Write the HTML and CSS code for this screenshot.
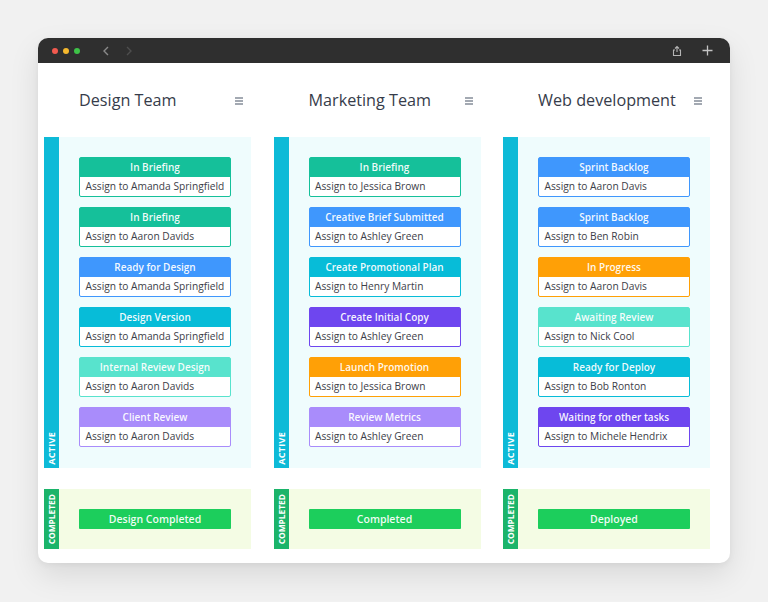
FILE: index.html
```html
<!DOCTYPE html>
<html>
<head>
<meta charset="utf-8">
<link rel="stylesheet" href="styles.css">
</head>
<body>
<div class="window">
  <div class="titlebar">
    <div class="dots"><span class="dot red"></span><span class="dot yellow"></span><span class="dot green"></span></div>
    <div class="nav">
      <svg width="8" height="10" viewBox="0 0 8 10"><path d="M6 1 L2 5 L6 9" fill="none" stroke="#8a8a8a" stroke-width="1.4"/></svg>
      <svg width="8" height="10" viewBox="0 0 8 10"><path d="M2 1 L6 5 L2 9" fill="none" stroke="#4e4e4e" stroke-width="1.4"/></svg>
    </div>
    <div class="spacer"></div>
    <div class="tools">
      <svg width="10" height="12" viewBox="0 0 10 12"><path d="M5 7 V1.5 M3 3.5 L5 1.5 L7 3.5 M3 5 H1.5 V10.5 H8.5 V5 H7" fill="none" stroke="#b5b5b5" stroke-width="1.1"/></svg>
      <svg width="11" height="11" viewBox="0 0 11 11"><path d="M5.5 0.5 V10.5 M0.5 5.5 H10.5" fill="none" stroke="#c4c4c4" stroke-width="1.3"/></svg>
    </div>
  </div>
  <div class="board">
    <div class="column">
      <div class="col-head"><h2>Design Team</h2><span class="menu"><i></i><i></i><i></i></span></div>
      <div class="section active">
        <div class="strip"><span>ACTIVE</span></div>
        <div class="panel">
          <div class="card teal"><div class="ch">In Briefing</div><div class="cb">Assign to Amanda Springfield</div></div>
          <div class="card teal"><div class="ch">In Briefing</div><div class="cb">Assign to Aaron Davids</div></div>
          <div class="card blue"><div class="ch">Ready for Design</div><div class="cb">Assign to Amanda Springfield</div></div>
          <div class="card cyan"><div class="ch">Design Version</div><div class="cb">Assign to Amanda Springfield</div></div>
          <div class="card aqua"><div class="ch">Internal Review Design</div><div class="cb">Assign to Aaron Davids</div></div>
          <div class="card lav"><div class="ch">Client Review</div><div class="cb">Assign to Aaron Davids</div></div>
        </div>
      </div>
      <div class="section done">
        <div class="strip"><span>COMPLETED</span></div>
        <div class="panel"><div class="done-btn">Design Completed</div></div>
      </div>
    </div>
    <div class="column">
      <div class="col-head"><h2>Marketing Team</h2><span class="menu"><i></i><i></i><i></i></span></div>
      <div class="section active">
        <div class="strip"><span>ACTIVE</span></div>
        <div class="panel">
          <div class="card teal"><div class="ch">In Briefing</div><div class="cb">Assign to Jessica Brown</div></div>
          <div class="card blue"><div class="ch">Creative Brief Submitted</div><div class="cb">Assign to Ashley Green</div></div>
          <div class="card cyan"><div class="ch">Create Promotional Plan</div><div class="cb">Assign to Henry Martin</div></div>
          <div class="card purple"><div class="ch">Create Initial Copy</div><div class="cb">Assign to Ashley Green</div></div>
          <div class="card orange"><div class="ch">Launch Promotion</div><div class="cb">Assign to Jessica Brown</div></div>
          <div class="card lav"><div class="ch">Review Metrics</div><div class="cb">Assign to Ashley Green</div></div>
        </div>
      </div>
      <div class="section done">
        <div class="strip"><span>COMPLETED</span></div>
        <div class="panel"><div class="done-btn">Completed</div></div>
      </div>
    </div>
    <div class="column">
      <div class="col-head"><h2>Web development</h2><span class="menu"><i></i><i></i><i></i></span></div>
      <div class="section active">
        <div class="strip"><span>ACTIVE</span></div>
        <div class="panel">
          <div class="card blue"><div class="ch">Sprint Backlog</div><div class="cb">Assign to Aaron Davis</div></div>
          <div class="card blue"><div class="ch">Sprint Backlog</div><div class="cb">Assign to Ben Robin</div></div>
          <div class="card orange"><div class="ch">In Progress</div><div class="cb">Assign to Aaron Davis</div></div>
          <div class="card aqua"><div class="ch">Awaiting Review</div><div class="cb">Assign to Nick Cool</div></div>
          <div class="card cyan"><div class="ch">Ready for Deploy</div><div class="cb">Assign to Bob Ronton</div></div>
          <div class="card purple"><div class="ch">Waiting for other tasks</div><div class="cb">Assign to Michele Hendrix</div></div>
        </div>
      </div>
      <div class="section done">
        <div class="strip"><span>COMPLETED</span></div>
        <div class="panel"><div class="done-btn">Deployed</div></div>
      </div>
    </div>
  </div>
</div>
</body>
</html>
```
FILE: styles.css
```css
* { box-sizing: border-box; }
html, body { margin: 0; }
body {
  background: #f1f1f1;
  padding: 38px 0 0 38px;
  font-family: "Open Sans", "Liberation Sans", sans-serif;
  height: 602px;
  overflow: hidden;
}
.window {
  width: 692px;
  height: 525px;
  background: #fff;
  border-radius: 10px;
  overflow: hidden;
  box-shadow: 0 12px 30px rgba(0,0,0,0.10), 0 2px 6px rgba(0,0,0,0.05);
}
.titlebar {
  height: 25px;
  background: #2f2f2f;
  display: flex;
  align-items: center;
  padding: 0 17px 0 14px;
}
.dots { display: flex; gap: 5px; }
.dot { width: 6px; height: 6px; border-radius: 50%; display: block; }
.red { background: #f25a4f; }
.yellow { background: #f5b82e; }
.green { background: #3ec348; }
.nav { display: flex; gap: 15px; margin-left: 22px; align-items: center; }
.nav svg { display: block; }
.spacer { flex: 1; }
.tools { display: flex; gap: 20px; align-items: center; }
.tools svg { display: block; }
.board {
  display: grid;
  grid-template-columns: 207px 207px 207px;
  column-gap: 22.5px;
  padding-left: 6px;
}
.col-head {
  height: 74px;
  display: flex;
  align-items: center;
  justify-content: space-between;
  padding: 0 8px 0 35px;
}
.col-head h2 {
  margin: 0;
  font-size: 16.2px;
  font-weight: 400;
  color: #363c4a;
  letter-spacing: 0;
}
.menu { display: flex; flex-direction: column; gap: 1.5px; width: 8px; margin-top: 2px; }
.menu i { display: block; height: 1.5px; background: #a3a9b2; }
.section { display: flex; }
.section.active { height: 331px; }
.section.done { height: 60px; margin-top: 21px; }
.strip {
  width: 15px;
  display: flex;
  align-items: flex-end;
  justify-content: center;
}
.active .strip { background: #0dbad7; }
.done .strip { background: #1bb46a; align-items: center; }
.strip span {
  writing-mode: vertical-rl;
  transform: rotate(180deg);
  color: #fff;
  font-size: 8.4px;
  font-weight: 700;
  line-height: 15px;
  padding-top: 3px;
}
.active .strip span { font-size: 9px; letter-spacing: 0.3px; }
.done .strip span { padding-top: 0; }
.panel {
  flex: 1;
  padding: 20px;
  display: flex;
  flex-direction: column;
  gap: 10px;
}
.active .panel { background: #effcfd; }
.done .panel { background: #f4fce4; justify-content: center; }
.card {
  height: 40px;
  border: 1.5px solid var(--c);
  border-radius: 2px;
  background: #fff;
  display: flex;
  flex-direction: column;
}
.ch {
  height: 18.5px;
  background: var(--c);
  color: rgba(255,255,255,0.95);
  font-size: 10px;
  font-weight: 600;
  text-align: center;
  line-height: 18px;
}
.cb {
  flex: 1;
  font-size: 10.2px;
  color: #3d4048;
  line-height: 18px;
  padding-left: 5.5px;
  white-space: nowrap;
}
.teal { --c: #15c09a; }
.blue { --c: #3f97fd; }
.cyan { --c: #07bcd8; }
.aqua { --c: #58e3cd; }
.lav { --c: #a98cfb; }
.purple { --c: #6e46ef; }
.orange { --c: #ffa006; }
.done-btn {
  height: 20px;
  background: #1cce5c;
  color: rgba(255,255,255,0.95);
  font-size: 10.5px;
  font-weight: 600;
  text-align: center;
  line-height: 20px;
  border-radius: 1px;
}
```
